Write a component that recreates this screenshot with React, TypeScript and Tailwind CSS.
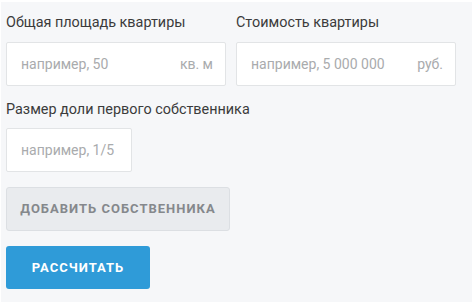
export default function App() {
  return (
    <div className="w-[474px] h-[304px] bg-white pt-[2px] pl-[1px]">
      <div className="w-[471px] h-[300px] bg-[#f6f7f9] pl-[5px] pt-[11px] font-['Roboto',sans-serif]">
        <div className="flex gap-[10px]">
          <div className="flex flex-col gap-[9px]">
            <label className="text-[14.4px] leading-[20px] text-[#3b3b3b]">Общая площадь квартиры</label>
            <div className="w-[220px] h-[44px] bg-white border border-[#e2e4e6] rounded-[2px] flex items-center justify-between pl-[14px] pr-[12px] text-[14px] text-[#a9abad]">
              <span>например, 50</span>
              <span>кв. м</span>
            </div>
          </div>
          <div className="flex flex-col gap-[9px]">
            <label className="text-[14.4px] leading-[20px] text-[#3b3b3b]">Стоимость квартиры</label>
            <div className="w-[220px] h-[44px] bg-white border border-[#e2e4e6] rounded-[2px] flex items-center justify-between pl-[14px] pr-[12px] text-[14px] text-[#a9abad]">
              <span>например, 5 000 000</span>
              <span>руб.</span>
            </div>
          </div>
        </div>
        <div className="flex flex-col gap-[8px] mt-[14px]">
          <label className="text-[14.4px] leading-[20px] text-[#3b3b3b]">Размер доли первого собственника</label>
          <div className="w-[126px] h-[44px] bg-white border border-[#e2e4e6] rounded-[2px] flex items-center pl-[14px] text-[14px] text-[#a9abad]">
            <span>например, 1/5</span>
          </div>
        </div>
        <button className="mt-[15px] w-[224px] h-[44px] bg-[#e9ebee] border border-[#dcdfe3] rounded-[3px] flex items-center justify-center text-[13px] font-bold tracking-[1px] text-[#85888c]">
          ДОБАВИТЬ СОБСТВЕННИКА
        </button>
        <button className="mt-[15px] w-[144px] h-[43px] bg-[#2f9bd8] rounded-[3px] flex items-center justify-center text-[13px] font-bold tracking-[1px] text-white">
          РАССЧИТАТЬ
        </button>
      </div>
    </div>
  );
}
